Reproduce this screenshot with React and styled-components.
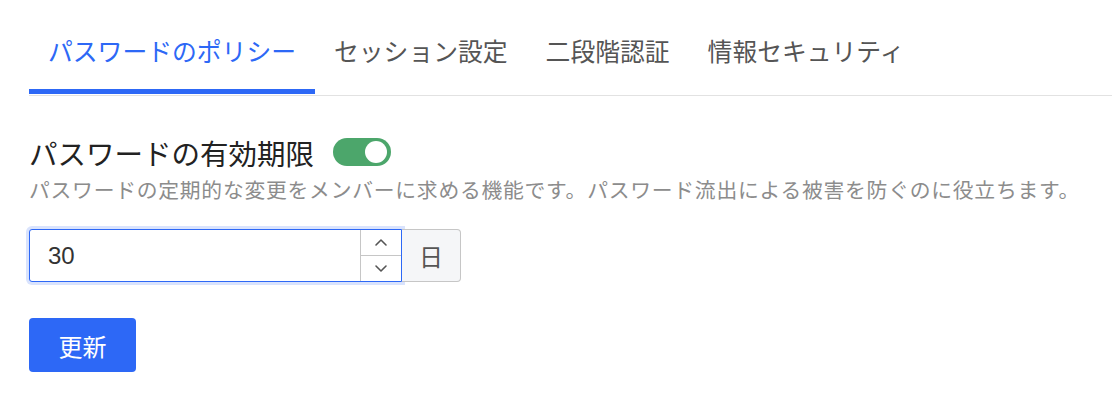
import React, { useState } from "react";
import styled, { createGlobalStyle } from "styled-components";

const GlobalStyle = createGlobalStyle`
  html, body {
    margin: 0;
    padding: 0;
    background: #ffffff;
  }
  body {
    font-family: "Liberation Sans", "Noto Sans CJK JP", sans-serif;
    color: #222;
  }
`;

const Page = styled.div`
  width: 1112px;
  height: 396px;
  padding: 0 0 0 29px;
  box-sizing: border-box;
  overflow: hidden;
`;

const TabBar = styled.div`
  display: flex;
  height: 96px;
  border-bottom: 1px solid #e2e2e2;
  box-sizing: border-box;
`;

const Tab = styled.div`
  position: relative;
  display: flex;
  align-items: center;
  padding: 6px 19px 2px;
  font-size: 24.8px;
  color: ${(p) => (p.active ? "#2d68f6" : "#555")};
  white-space: nowrap;

  &::after {
    content: "";
    display: ${(p) => (p.active ? "block" : "none")};
    position: absolute;
    left: 0;
    right: 0;
    bottom: 1px;
    height: 5px;
    background: #2d68f6;
  }
`;

const Section = styled.div`
  padding-top: 38px;
  display: flex;
  flex-direction: column;
`;

const TitleRow = styled.div`
  display: flex;
  align-items: center;
  gap: 19px;
  height: 36px;
`;

const Title = styled.h2`
  margin: 0;
  font-size: 28.5px;
  font-weight: 400;
  color: #222;
`;

const Switch = styled.button`
  position: relative;
  width: 58px;
  height: 28px;
  border: none;
  border-radius: 14px;
  padding: 0;
  background: ${(p) => (p.on ? "#4ca66b" : "#c8c8c8")};
  cursor: pointer;

  &::after {
    content: "";
    position: absolute;
    top: 3px;
    left: ${(p) => (p.on ? "32px" : "3px")};
    width: 22px;
    height: 22px;
    border-radius: 50%;
    background: #fff;
  }
`;

const Description = styled.p`
  margin: 4px 0 0;
  font-size: 20.8px;
  letter-spacing: 0.75px;
  color: #8c8c8c;
  white-space: nowrap;
`;

const InputGroup = styled.div`
  display: flex;
  margin-top: 25px;
  height: 53px;
`;

const NumberBox = styled.div`
  display: flex;
  width: 373px;
  box-sizing: border-box;
  border: 1px solid #2d68f6;
  border-radius: 3px 0 0 3px;
  box-shadow: 0 0 0 3px #d9e3fd;
  background: #fff;
`;

const NumberValue = styled.input`
  flex: 1;
  min-width: 0;
  border: none;
  outline: none;
  padding: 0 0 0 18px;
  font-family: "Liberation Sans", sans-serif;
  font-size: 24px;
  color: #333;
  background: transparent;
`;

const Spinner = styled.div`
  display: flex;
  flex-direction: column;
  width: 40px;
  border-left: 1px solid #c6c6c6;
`;

const SpinButton = styled.div`
  flex: 1;
  display: flex;
  align-items: center;
  justify-content: center;
  color: #555;
  border-top: ${(p) => (p.bottom ? "1px solid #c6c6c6" : "none")};
`;

const Addon = styled.div`
  display: flex;
  align-items: center;
  justify-content: center;
  width: 59px;
  box-sizing: border-box;
  border: 1px solid #c6c6c6;
  border-left: none;
  border-radius: 0 4px 4px 0;
  background: #f5f6f8;
  font-size: 24px;
  color: #555;
`;

const SubmitButton = styled.button`
  margin-top: 36px;
  width: 107px;
  height: 54px;
  border: none;
  border-radius: 4px;
  background: #2d68f6;
  color: #fff;
  font-family: "Liberation Sans", "Noto Sans CJK JP", sans-serif;
  font-size: 24px;
  cursor: pointer;
`;

const Chevron = ({ up }) => (
  <svg width="14" height="9" viewBox="0 0 14 9" fill="none">
    <path
      d={up ? "M2 7 L7 2 L12 7" : "M2 2 L7 7 L12 2"}
      stroke="currentColor"
      strokeWidth="1.6"
      strokeLinecap="round"
      strokeLinejoin="round"
    />
  </svg>
);

const tabs = ["パスワードのポリシー", "セッション設定", "二段階認証", "情報セキュリティ"];

export default function App() {
  const [on, setOn] = useState(true);
  const [days, setDays] = useState("30");

  return (
    <Page>
      <GlobalStyle />
      <TabBar>
        {tabs.map((t, i) => (
          <Tab key={t} active={i === 0}>
            {t}
          </Tab>
        ))}
      </TabBar>
      <Section>
        <TitleRow>
          <Title>パスワードの有効期限</Title>
          <Switch on={on} onClick={() => setOn(!on)} aria-label="toggle" />
        </TitleRow>
        <Description>
          パスワードの定期的な変更をメンバーに求める機能です。パスワード流出による被害を防ぐのに役立ちます。
        </Description>
        <InputGroup>
          <NumberBox>
            <NumberValue value={days} onChange={(e) => setDays(e.target.value)} />
            <Spinner>
              <SpinButton>
                <Chevron up />
              </SpinButton>
              <SpinButton bottom>
                <Chevron />
              </SpinButton>
            </Spinner>
          </NumberBox>
          <Addon>日</Addon>
        </InputGroup>
        <div>
          <SubmitButton>更新</SubmitButton>
        </div>
      </Section>
    </Page>
  );
}
